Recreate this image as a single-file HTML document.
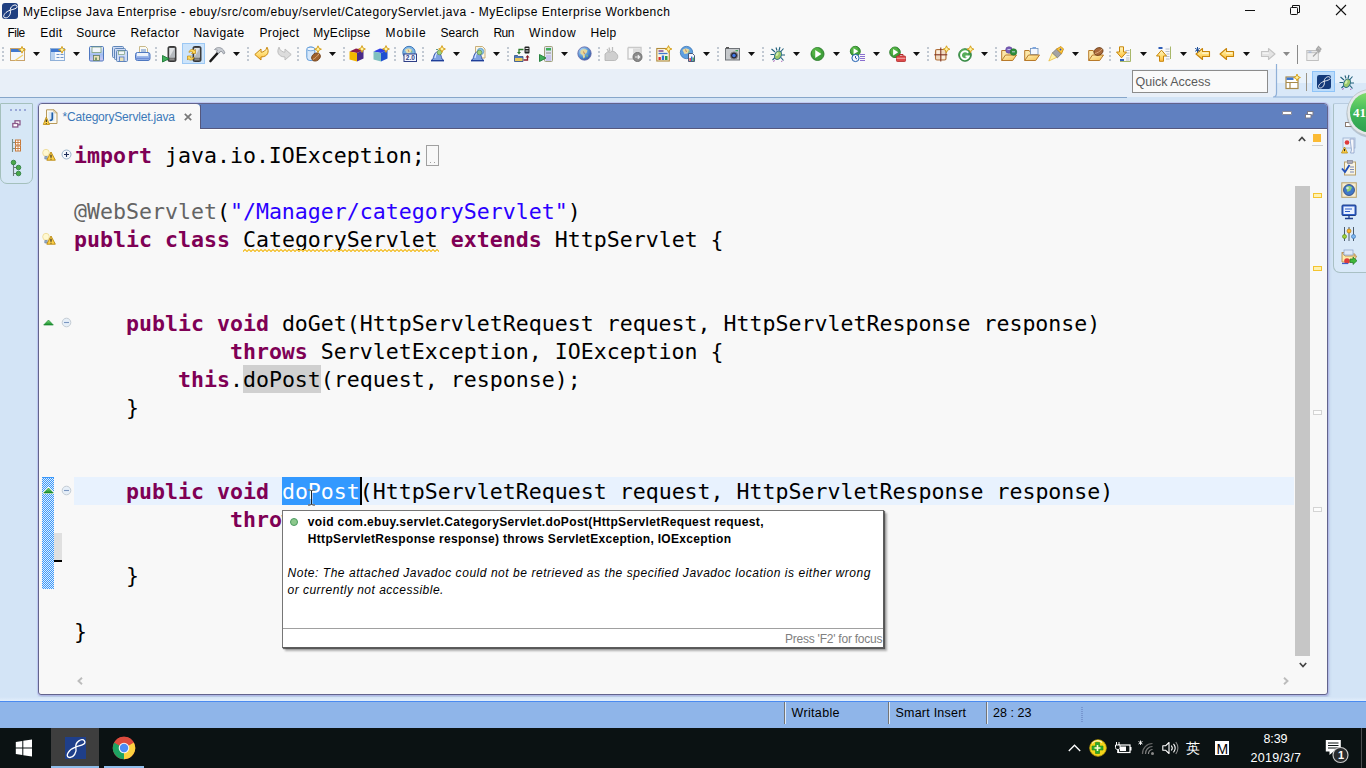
<!DOCTYPE html>
<html lang="en"><head><meta charset="utf-8"><title>MyEclipse Java Enterprise - CategoryServlet.java</title>
<style>
*{box-sizing:border-box}
html,body{margin:0;padding:0}
body{width:1366px;height:768px;overflow:hidden;position:relative;background:#d3e4f6;font-family:'Liberation Sans',sans-serif;font-size:12px;color:#000}
.a{position:absolute}
.t{position:absolute;white-space:pre;line-height:16px;height:16px}
svg{position:absolute;overflow:visible}
.code{position:absolute;left:74px;white-space:pre;font-family:'DejaVu Sans Mono','Liberation Mono',monospace;font-size:21.593px;line-height:28px;height:28px;color:#000}
.k{color:#7f0055;font-weight:bold}
.s{color:#2a00ff}
.an{color:#646464}
.sel{color:#fff}

</style></head><body>
<div class="a" style="left:0;top:0;width:1366px;height:43px;background:#f9f9f9"></div><div class="a" style="left:0;top:43px;width:1366px;height:26px;background:#f9f9f9"></div><div class="a" style="left:0;top:69px;width:1366px;height:28px;background:#e8eff8"></div><div class="a" style="left:0;top:97px;width:1127px;height:1px;background:#86a6ca"></div><div class="a" style="left:0;top:98px;width:1366px;height:602px;background:#d3e4f6"></div><span class="t" style="left:23px;top:3.5px;font-size:12px;letter-spacing:0.506px;">MyEclipse Java Enterprise - ebuy/src/com/ebuy/servlet/CategoryServlet.java - MyEclipse Enterprise Workbench</span><span class="t" style="left:7.5px;top:24.5px;font-size:12px;letter-spacing:-0.515px;">File</span><span class="t" style="left:40.3px;top:24.5px;font-size:12px;letter-spacing:0.338px;">Edit</span><span class="t" style="left:76.3px;top:24.5px;font-size:12px;letter-spacing:0.274px;">Source</span><span class="t" style="left:130.4px;top:24.5px;font-size:12px;letter-spacing:0.492px;">Refactor</span><span class="t" style="left:193.4px;top:24.5px;font-size:12px;letter-spacing:0.504px;">Navigate</span><span class="t" style="left:259.5px;top:24.5px;font-size:12px;letter-spacing:0.357px;">Project</span><span class="t" style="left:313.3px;top:24.5px;font-size:12px;letter-spacing:0.289px;">MyEclipse</span><span class="t" style="left:385.5px;top:24.5px;font-size:12px;letter-spacing:0.988px;">Mobile</span><span class="t" style="left:440.5px;top:24.5px;font-size:12px;letter-spacing:0.034px;">Search</span><span class="t" style="left:493.4px;top:24.5px;font-size:12px;letter-spacing:-0.458px;">Run</span><span class="t" style="left:529px;top:24.5px;font-size:12px;letter-spacing:0.783px;">Window</span><span class="t" style="left:590.4px;top:24.5px;font-size:12px;letter-spacing:0.371px;">Help</span><svg width="0" height="0" style="left:0;top:0"><defs><linearGradient id="yg" x1="0" y1="0" x2="0" y2="1"><stop offset="0" stop-color="#fff6c8"/><stop offset=".5" stop-color="#ffe07a"/><stop offset="1" stop-color="#ffb83a"/></linearGradient><linearGradient id="fg" x1="0" y1="0" x2="1" y2="1"><stop offset="0" stop-color="#fff0b8"/><stop offset="1" stop-color="#f4c050"/></linearGradient></defs></svg><div class="a" style="left:2px;top:47px;width:2px;height:2px;background:#c2c9d2"></div><div class="a" style="left:2px;top:51px;width:2px;height:2px;background:#c2c9d2"></div><div class="a" style="left:2px;top:55px;width:2px;height:2px;background:#c2c9d2"></div><div class="a" style="left:2px;top:59px;width:2px;height:2px;background:#c2c9d2"></div><svg style="left:10px;top:46px" width="16" height="16" viewBox="0 0 16 16"><rect x=".5" y="2.5" width="14" height="12" fill="#f4f7fb" stroke="#c9a36a"/><rect x="1" y="3" width="10" height="3" fill="#3f78d0"/><path d="M5 14.5L13 9" stroke="#f1cf6a" stroke-width="1.2" fill="none"/><path d="M12 0.3999999999999999L13.0 2.8L15.4 3.8L13.0 4.8L12 7.199999999999999L11.0 4.8L8.6 3.8L11.0 2.8Z" fill="#fff3a0" stroke="#d39a12" stroke-width=".9"/></svg><svg style="left:33px;top:52px" width="7" height="4" viewBox="0 0 7 4"><path d="M0 0h7L3.5 4z" fill="#111"/></svg><svg style="left:50px;top:46px" width="16" height="16" viewBox="0 0 16 16"><rect x=".5" y="2.5" width="14" height="12" fill="#f4f7fb" stroke="#8fb0d8"/><rect x="1" y="3" width="10" height="3" fill="#3f78d0"/><rect x="1" y="6" width="4" height="8" fill="#b9d2f0"/><path d="M6.5 8.5h7M6.5 11.5h7" stroke="#6f95c8" stroke-width="1.2" stroke-dasharray="3 1"/><path d="M12 0.3999999999999999L13.0 2.8L15.4 3.8L13.0 4.8L12 7.199999999999999L11.0 4.8L8.6 3.8L11.0 2.8Z" fill="#fff3a0" stroke="#d39a12" stroke-width=".9"/></svg><svg style="left:73px;top:52px" width="7" height="4" viewBox="0 0 7 4"><path d="M0 0h7L3.5 4z" fill="#111"/></svg><svg style="left:89px;top:46px" width="16" height="16" viewBox="0 0 16 16"><defs><linearGradient id="sv" x1="0" y1="0" x2="0" y2="1"><stop offset="0" stop-color="#f2f6fd"/><stop offset=".55" stop-color="#a4bef0"/><stop offset="1" stop-color="#d0c8f4"/></linearGradient></defs><rect x=".5" y=".5" width="14" height="14.5" rx="1.2" fill="url(#sv)" stroke="#4f78c0"/><rect x="3" y="1" width="9" height="5.5" fill="#f4f6fb" stroke="#7aa07a" stroke-width=".8"/><rect x="4.5" y="9.5" width="6" height="5" fill="#e9e0b8" stroke="#5f7a5f" stroke-width=".8"/><rect x="6" y="11.5" width="2" height="3" fill="#7a9a6a"/></svg><svg style="left:111.5px;top:46px" width="16" height="16" viewBox="0 0 16 16"><rect x="0.5" y="0.5" width="11" height="11" rx="1" fill="#cfdcf6" stroke="#5f86b8"/><rect x="2.5" y="2.5" width="11" height="11" rx="1" fill="#cfdcf6" stroke="#5f86b8"/><rect x="4.5" y="4.5" width="11" height="11" rx="1" fill="#cfdcf6" stroke="#5f86b8"/><rect x="6.5" y="5" width="6" height="3.5" fill="#f4f6fb" stroke="#7aa07a" stroke-width=".7"/><rect x="7.5" y="11" width="4.5" height="4.5" fill="#e9e0b8" stroke="#4f78c0" stroke-width=".8"/></svg><svg style="left:135px;top:46px" width="16" height="16" viewBox="0 0 16 16"><path d="M4.5 .5h6l2 2v7h-8z" fill="#fbfbf4" stroke="#c9b98a"/><path d="M6 4h5M6 6h5" stroke="#5f86c8"/><rect x=".5" y="6.5" width="14.5" height="8" rx="2" fill="#9db8ea" stroke="#4f78c0"/><rect x="2" y="7" width="11" height="3" fill="#eef3fb"/><path d="M1 12.5h14" stroke="#6f8fd8" stroke-width="1.5"/></svg><div class="a" style="left:155px;top:47px;width:2px;height:2px;background:#c2c9d2"></div><div class="a" style="left:155px;top:51px;width:2px;height:2px;background:#c2c9d2"></div><div class="a" style="left:155px;top:55px;width:2px;height:2px;background:#c2c9d2"></div><div class="a" style="left:155px;top:59px;width:2px;height:2px;background:#c2c9d2"></div><svg style="left:162px;top:46px" width="16" height="16" viewBox="0 0 16 16"><rect x="6" y=".5" width="8" height="15" rx="1.500" fill="#4a4a4a" stroke="#2a2a2a" stroke-width=".9"/><rect x="7.2" y="2" width="5.600" height="9.500" fill="#dfe2e4"/><path d="M7.2 11.500L12.8 2v9.500z" fill="#b4b9bd"/><rect x="7.5" y="12.300" width="5" height="2" fill="#8a8a8a"/><path d="M.5 9.5v6.5l6.5-3.2z" fill="#3fae5a" stroke="#1d7a35" stroke-width=".9"/></svg><div class="a" style="left:182px;top:43px;width:23px;height:21px;background:#cce4fb;border:1px solid #9cc8f4"></div><svg style="left:186px;top:46px" width="16" height="16" viewBox="0 0 16 16"><rect x="7" y=".5" width="8" height="15" rx="1.500" fill="#4a4a4a" stroke="#2a2a2a" stroke-width=".9"/><rect x="8.2" y="2" width="5.600" height="9.500" fill="#dfe2e4"/><path d="M8.2 11.500L13.8 2v9.500z" fill="#b4b9bd"/><rect x="8.5" y="12.300" width="5" height="2" fill="#8a8a8a"/><path d="M3 6.5c0-3 4-4 5.5-2l1-1v4h-4l1.3-1.3c-1-1-3-.6-3.800 .3z" fill="#ffd95a" stroke="#c08a10" stroke-width=".7"/><path d="M8 11c0 3-4 4-5.500 2l-1 1v-4h4l-1.300 1.300c1 1 3 .6 3.800-.3z" fill="#ffd95a" stroke="#c08a10" stroke-width=".7"/></svg><svg style="left:209px;top:46px" width="16" height="16" viewBox="0 0 16 16"><path d="M1.500 15L10 5.500" stroke="#1a1a1a" stroke-width="2.600" stroke-linecap="round"/><path d="M5.500 3.500c2-2.500 6-3 9 .5l1.500 3-1.500 1-1.500-2.500-2 .2-1.500 1.800-2-1.800 1-1.500z" fill="#c8ccd2" stroke="#8a8f98" stroke-width=".8"/></svg><svg style="left:233px;top:52px" width="7" height="4" viewBox="0 0 7 4"><path d="M0 0h7L3.5 4z" fill="#111"/></svg><div class="a" style="left:247px;top:47px;width:2px;height:2px;background:#c2c9d2"></div><div class="a" style="left:247px;top:51px;width:2px;height:2px;background:#c2c9d2"></div><div class="a" style="left:247px;top:55px;width:2px;height:2px;background:#c2c9d2"></div><div class="a" style="left:247px;top:59px;width:2px;height:2px;background:#c2c9d2"></div><svg style="left:254px;top:46px" width="16" height="16" viewBox="0 0 16 16"><g><path d="M.8 8.500L7 3v3.200c2.500 0 5-1.500 6-5 2.500 4.500 1 9.500-6 9.800V14z" fill="url(#yg)" stroke="#c8860a" stroke-width="1" stroke-linejoin="round"/></g></svg><svg style="left:276px;top:46px" width="16" height="16" viewBox="0 0 16 16"><g transform="translate(16,0) scale(-1,1)"><path d="M.8 8.500L7 3v3.200c2.500 0 5-1.500 6-5 2.500 4.500 1 9.500-6 9.800V14z" fill="#dcdcdc" stroke="#bdbdbd" stroke-width="1" stroke-linejoin="round"/></g></svg><div class="a" style="left:297px;top:47px;width:2px;height:2px;background:#c2c9d2"></div><div class="a" style="left:297px;top:51px;width:2px;height:2px;background:#c2c9d2"></div><div class="a" style="left:297px;top:55px;width:2px;height:2px;background:#c2c9d2"></div><div class="a" style="left:297px;top:59px;width:2px;height:2px;background:#c2c9d2"></div><svg style="left:306px;top:46px" width="16" height="16" viewBox="0 0 16 16"><rect x=".8" y="1" width="8" height="13.500" rx="3" fill="#d6e8fb" stroke="#5f9ad8"/><ellipse cx="4.800" cy="3" rx="4" ry="1.800" fill="#eef6ff" stroke="#5f9ad8" stroke-width=".8"/><ellipse cx="10" cy="11" rx="4.700" ry="3.700" transform="rotate(-35 10 11)" fill="#a0622d" stroke="#6a3a12" stroke-width=".8"/><path d="M6.800 13.500c2-1 4.500-3 6-5.500" stroke="#e0b080" stroke-width=".9" fill="none"/><path d="M12 -0.19999999999999973L13.0 2.2L15.4 3.2L13.0 4.2L12 6.6L11.0 4.2L8.6 3.2L11.0 2.2Z" fill="#fff3a0" stroke="#d39a12" stroke-width=".9"/></svg><svg style="left:329px;top:52px" width="7" height="4" viewBox="0 0 7 4"><path d="M0 0h7L3.5 4z" fill="#111"/></svg><div class="a" style="left:343px;top:47px;width:2px;height:2px;background:#c2c9d2"></div><div class="a" style="left:343px;top:51px;width:2px;height:2px;background:#c2c9d2"></div><div class="a" style="left:343px;top:55px;width:2px;height:2px;background:#c2c9d2"></div><div class="a" style="left:343px;top:59px;width:2px;height:2px;background:#c2c9d2"></div><svg style="left:349px;top:46px" width="16" height="16" viewBox="0 0 16 16"><path d="M.5 5.500L7 2.500l7.500 1.500L8 7z" fill="#8a1a4a"/><path d="M.5 5.500L8 7v8.500L.5 13.500z" fill="#f4b800"/><path d="M8 7l6.500-3v8.500L8 15.500z" fill="#4a2a8a"/><path d="M13 -0.3999999999999999L14.0 2.0L16.4 3L14.0 4.0L13 6.4L12.0 4.0L9.6 3L12.0 2.0Z" fill="#fff3a0" stroke="#d39a12" stroke-width=".9"/></svg><svg style="left:373px;top:46px" width="16" height="16" viewBox="0 0 16 16"><path d="M.5 5.500L7 2.500l7.500 1.500L8 7z" fill="#2f3fe8"/><path d="M.5 5.500L8 7v8.500L.5 13.500z" fill="#7fc0c0"/><path d="M8 7l6.500-3v8.500L8 15.500z" fill="#1f4fd0"/><path d="M13 -0.3999999999999999L14.0 2.0L16.4 3L14.0 4.0L13 6.4L12.0 4.0L9.6 3L12.0 2.0Z" fill="#fff3a0" stroke="#d39a12" stroke-width=".9"/></svg><div class="a" style="left:394px;top:47px;width:2px;height:2px;background:#c2c9d2"></div><div class="a" style="left:394px;top:51px;width:2px;height:2px;background:#c2c9d2"></div><div class="a" style="left:394px;top:55px;width:2px;height:2px;background:#c2c9d2"></div><div class="a" style="left:394px;top:59px;width:2px;height:2px;background:#c2c9d2"></div><svg style="left:401px;top:46px" width="16" height="16" viewBox="0 0 16 16"><circle cx="8" cy="6.500" r="6.200" fill="#7fb6e6" stroke="#3f78b8"/><path d="M4 4c2-2 5-2 7 0l-2 3-3 .5z" fill="#e9e2b0"/><path d="M7 3.500l1 2.500" stroke="#c0704a" stroke-width=".7"/><path d="M10 4l1.500 2-1 1z" fill="#8fc06a"/><rect x="3" y="8" width="12.500" height="7.500" fill="#f4f6ff" stroke="#2f3f86" stroke-width="1"/><text x="9.300" y="14.300" font-size="6.500" font-weight="bold" font-family="Liberation Sans,sans-serif" text-anchor="middle" fill="#2f3f86">2.0</text></svg><div class="a" style="left:422px;top:47px;width:2px;height:2px;background:#c2c9d2"></div><div class="a" style="left:422px;top:51px;width:2px;height:2px;background:#c2c9d2"></div><div class="a" style="left:422px;top:55px;width:2px;height:2px;background:#c2c9d2"></div><div class="a" style="left:422px;top:59px;width:2px;height:2px;background:#c2c9d2"></div><svg style="left:430px;top:46px" width="16" height="16" viewBox="0 0 16 16"><path d="M1 14.500h13l-2-1.500c-1-4-2-7-4.500-7S4 9 3 13z" fill="#7fa2e2" stroke="#2f4fa8" stroke-width=".9"/><path d="M5 12c.5-3 1.500-5 2.500-5" stroke="#dbe8ff" stroke-width="1.200" fill="none"/><path d="M1 14.700h13" stroke="#1f3f9a" stroke-width="1.400"/><circle cx="9.500" cy="6.500" r="2.300" fill="#9fd07a" stroke="#5f8f4a" stroke-width=".7"/><path d="M12 -0.3999999999999999L13.0 2.0L15.4 3L13.0 4.0L12 6.4L11.0 4.0L8.6 3L11.0 2.0Z" fill="#fff3a0" stroke="#d39a12" stroke-width=".9"/><path d="M8 3.500h-2" stroke="#5f9a8a"/></svg><svg style="left:453px;top:52px" width="7" height="4" viewBox="0 0 7 4"><path d="M0 0h7L3.5 4z" fill="#111"/></svg><svg style="left:470px;top:46px" width="16" height="16" viewBox="0 0 16 16"><path d="M5.500 .5h7l2.500 2.500v9h-9.500z" fill="#fbf6e6" stroke="#c9b07a"/><circle cx="10.500" cy="5.500" r="3.200" fill="#8fc6e8" stroke="#4f8fc0" stroke-width=".7"/><path d="M1 14.500h13l-2-1.500c-1-4-2-7-4.500-7S4 9 3 13z" fill="#7fa2e2" stroke="#2f4fa8" stroke-width=".9"/><path d="M5 12c.5-3 1.500-5 2.500-5" stroke="#dbe8ff" stroke-width="1.200" fill="none"/><path d="M1 14.700h13" stroke="#1f3f9a" stroke-width="1.400"/><circle cx="9.500" cy="6.500" r="2.300" fill="#9fd07a" stroke="#5f8f4a" stroke-width=".7"/></svg><svg style="left:493px;top:52px" width="7" height="4" viewBox="0 0 7 4"><path d="M0 0h7L3.5 4z" fill="#111"/></svg><div class="a" style="left:507px;top:47px;width:2px;height:2px;background:#c2c9d2"></div><div class="a" style="left:507px;top:51px;width:2px;height:2px;background:#c2c9d2"></div><div class="a" style="left:507px;top:55px;width:2px;height:2px;background:#c2c9d2"></div><div class="a" style="left:507px;top:59px;width:2px;height:2px;background:#c2c9d2"></div><svg style="left:513.5px;top:46px" width="16" height="16" viewBox="0 0 16 16"><rect x="10.500" y=".5" width="5" height="7" rx="1" fill="#222"/><path d="M11.500 2.500h3M11.500 5h3" stroke="#e8e8e8" stroke-width="1.100"/><path d="M9.500 3.500H5v3" stroke="#2f7a2f" stroke-width="1.300" fill="none"/><path d="M3 6l2 2.500L7 6z" fill="#2f7a2f"/><path d="M.5 9.500h3l1 1h4.500v5H.5z" fill="#4f78b8" stroke="#2f4f86" stroke-width=".8"/><path d="M1 12h7.500v3H1z" fill="#e9c95a"/><path d="M9.500 14h4v-3" stroke="#8a1a2a" stroke-width="1.300" fill="none"/><path d="M11.500 11.500l2-2.500 2 2.500z" fill="#8a1a2a"/></svg><svg style="left:538.5px;top:46px" width="16" height="16" viewBox="0 0 16 16"><rect x="5.500" y=".5" width="8" height="15" rx="1" fill="#dfe3ee" stroke="#a0a07a"/><rect x="7" y="2" width="5" height="2.500" fill="#3fae5a"/><path d="M7 7h5" stroke="#888"/><rect x="7" y="9" width="5" height="6" fill="#c9c6ee"/><path d="M.5 8.500V15.500l6.500-3.500z" fill="#3fae5a" stroke="#1d7a35" stroke-width=".9"/></svg><svg style="left:561px;top:52px" width="7" height="4" viewBox="0 0 7 4"><path d="M0 0h7L3.5 4z" fill="#111"/></svg><svg style="left:577px;top:46px" width="16" height="16" viewBox="0 0 16 16"><defs><radialGradient id="gl" cx=".35" cy=".3" r=".8"><stop offset="0" stop-color="#bfe0fb"/><stop offset=".6" stop-color="#4f8fd0"/><stop offset="1" stop-color="#2a4f9a"/></radialGradient></defs><circle cx="7.500" cy="7.500" r="6.700" fill="url(#gl)" stroke="#6a6aa8" stroke-width=".8"/><path d="M3.500 5c1.500-2 5-2.500 7-.5l-1 2.500-2 1 .5 3-1.500 1.500-1-3.500-2-1.500z" fill="#e4d89a"/><path d="M6.500 5.500l1 2.500" stroke="#b85a3a" stroke-width=".7"/><path d="M9 8.500l2 1-1 2z" fill="#8fc06a"/></svg><div class="a" style="left:598px;top:47px;width:2px;height:2px;background:#c2c9d2"></div><div class="a" style="left:598px;top:51px;width:2px;height:2px;background:#c2c9d2"></div><div class="a" style="left:598px;top:55px;width:2px;height:2px;background:#c2c9d2"></div><div class="a" style="left:598px;top:59px;width:2px;height:2px;background:#c2c9d2"></div><svg style="left:604px;top:46px" width="16" height="16" viewBox="0 0 16 16"><path d="M1 14.500V8l3-2.500 2 1 2-1.500 3 1 2.500 3c1 3-1 5.500-3 5.500z" fill="#cfcfcf" stroke="#b0b0b0" stroke-width=".8"/><path d="M5 1.500l1 4M8.500 1v4.500M3 3l2 3" stroke="#bdbdbd" stroke-width="1.300"/></svg><svg style="left:627px;top:46px" width="16" height="16" viewBox="0 0 16 16"><path d="M1 1.500h13V9M1 1.500V13h5" fill="none" stroke="#c9c9c9" stroke-width="1.400"/><rect x="6" y="2.500" width="7" height="6" fill="#dcdcdc"/><circle cx="10.500" cy="11" r="4.500" fill="#8c8c8c" stroke="#6f6f6f"/><path d="M8 11h4.500M10.800 9.300l1.800 1.700-1.800 1.700" stroke="#f0f0f0" stroke-width="1.200" fill="none"/></svg><div class="a" style="left:649px;top:47px;width:2px;height:2px;background:#c2c9d2"></div><div class="a" style="left:649px;top:51px;width:2px;height:2px;background:#c2c9d2"></div><div class="a" style="left:649px;top:55px;width:2px;height:2px;background:#c2c9d2"></div><div class="a" style="left:649px;top:59px;width:2px;height:2px;background:#c2c9d2"></div><svg style="left:655.5px;top:46px" width="16" height="16" viewBox="0 0 16 16"><rect x=".8" y="2.500" width="12.500" height="12.500" fill="#fbf6e4" stroke="#b08a3a" stroke-width="1.100"/><path d="M2.500 5h5" stroke="#6a2a8a" stroke-width="1.300"/><path d="M2.500 7.500h9" stroke="#3f78d0" stroke-width="1.300"/><rect x="2.500" y="11" width="2.300" height="3" fill="#e02a2a"/><rect x="5.800" y="9.500" width="2.300" height="4.500" fill="#2f6fd8"/><rect x="9" y="10" width="2.500" height="4" fill="#2f9a4a"/><path d="M12.5 -0.3999999999999999L13.5 2.0L15.9 3L13.5 4.0L12.5 6.4L11.5 4.0L9.1 3L11.5 2.0Z" fill="#fff3a0" stroke="#d39a12" stroke-width=".9"/></svg><svg style="left:680px;top:46px" width="16" height="16" viewBox="0 0 16 16"><circle cx="6.500" cy="6.500" r="6.200" fill="#5f9fe0" stroke="#3f78b8" stroke-width=".8"/><path d="M2.500 4c2-2 5-2 7 0l-2 3.500-3 .5z" fill="#e8d9a0"/><path d="M5.500 3.500l1 2.500" stroke="#b85a3a" stroke-width=".7"/><path d="M8.500 4l1.500 2-1.500 1z" fill="#8fc06a"/><path d="M8.500 7.500h4l2 2v6h-6z" fill="#f4f6ff" stroke="#3a4a6a" stroke-width=".9"/><rect x="9.500" y="12" width="1.300" height="3" fill="#e02a2a"/><rect x="11" y="10.500" width="1.300" height="4.500" fill="#2f6fd8"/><rect x="12.500" y="11.500" width="1.300" height="3.500" fill="#2f9a4a"/></svg><svg style="left:703px;top:52px" width="7" height="4" viewBox="0 0 7 4"><path d="M0 0h7L3.5 4z" fill="#111"/></svg><div class="a" style="left:717px;top:47px;width:2px;height:2px;background:#c2c9d2"></div><div class="a" style="left:717px;top:51px;width:2px;height:2px;background:#c2c9d2"></div><div class="a" style="left:717px;top:55px;width:2px;height:2px;background:#c2c9d2"></div><div class="a" style="left:717px;top:59px;width:2px;height:2px;background:#c2c9d2"></div><svg style="left:724.5px;top:46px" width="16" height="16" viewBox="0 0 16 16"><rect x=".5" y="2.500" width="14" height="11.500" fill="#c6c9cc" stroke="#6f7378"/><rect x="1" y="1" width="3" height="1.500" fill="#555"/><rect x="10.500" y="4" width="2.500" height="1.300" fill="#3fae5a"/><circle cx="9" cy="9.500" r="3.600" fill="#2a2a3a" stroke="#888"/><circle cx="9" cy="9.500" r="1.700" fill="#3f78e8"/></svg><svg style="left:748px;top:52px" width="7" height="4" viewBox="0 0 7 4"><path d="M0 0h7L3.5 4z" fill="#111"/></svg><div class="a" style="left:762px;top:47px;width:2px;height:2px;background:#c2c9d2"></div><div class="a" style="left:762px;top:51px;width:2px;height:2px;background:#c2c9d2"></div><div class="a" style="left:762px;top:55px;width:2px;height:2px;background:#c2c9d2"></div><div class="a" style="left:762px;top:59px;width:2px;height:2px;background:#c2c9d2"></div><svg style="left:770px;top:46px" width="16" height="16" viewBox="0 0 16 16"><path d="M1.500 3l3.500 3M13.500 2.500l-3 3.500M.5 8.500h3.500M15 9h-3.500M2.500 14l2.500-2.500M13.500 14.500l-2.500-3M6 1.500l1 3M10 1l-1 3.500" stroke="#1f5f7a" stroke-width="1.100" fill="none"/><ellipse cx="8" cy="9.200" rx="3.200" ry="4.500" transform="rotate(28 8 9.200)" fill="#9cc86a" stroke="#2a6a84" stroke-width="1"/><ellipse cx="7.200" cy="8.200" rx="1.200" ry="2" transform="rotate(28 7.200 8.200)" fill="#d2ecaa"/><path d="M3 15.500l2-1M11 15.500l1.500-.5" stroke="#a04fb0" stroke-width=".8"/></svg><svg style="left:793px;top:52px" width="7" height="4" viewBox="0 0 7 4"><path d="M0 0h7L3.5 4z" fill="#111"/></svg><svg style="left:809.5px;top:46px" width="16" height="16" viewBox="0 0 16 16"><circle cx="7.5" cy="8" r="6.5" fill="#3f9f3a" stroke="#2a7a2a" stroke-width=".9"/><circle cx="6.525" cy="6.375" r="4.55" fill="#5fbf4a" opacity=".6"/><path d="M5.225 4.1L11.4 8L5.225 11.9z" fill="#fff"/></svg><svg style="left:833px;top:52px" width="7" height="4" viewBox="0 0 7 4"><path d="M0 0h7L3.5 4z" fill="#111"/></svg><svg style="left:848.5px;top:46px" width="16" height="16" viewBox="0 0 16 16"><circle cx="6.3" cy="5.3" r="5" fill="#3f9f3a" stroke="#2a7a2a" stroke-width=".9"/><circle cx="5.55" cy="4.05" r="3.5" fill="#5fbf4a" opacity=".6"/><path d="M4.55 2.3L9.3 5.3L4.55 8.3z" fill="#fff"/><circle cx="6.500" cy="12" r="3.600" fill="#f4f8ff" stroke="#1f5fb0" stroke-width="1"/><path d="M6.500 10v2l1.500 1" stroke="#1f3f8a" stroke-width=".9" fill="none"/><path d="M11 8.500h5M11 10.500h5M11 12.500h5M11 14.500h5" stroke="#8a6fd0" stroke-width="1"/></svg><svg style="left:873px;top:52px" width="7" height="4" viewBox="0 0 7 4"><path d="M0 0h7L3.5 4z" fill="#111"/></svg><svg style="left:888.5px;top:46px" width="16" height="16" viewBox="0 0 16 16"><circle cx="6" cy="6.3" r="5.3" fill="#3f9f3a" stroke="#2a7a2a" stroke-width=".9"/><circle cx="5.205" cy="4.975" r="3.7099999999999995" fill="#5fbf4a" opacity=".6"/><path d="M4.1450000000000005 3.12L9.18 6.3L4.1450000000000005 9.48z" fill="#fff"/><rect x="7.500" y="10" width="9" height="5.500" rx=".8" fill="#e04a4a" stroke="#b02a2a" stroke-width=".8"/><path d="M10 10V8.500h4V10" stroke="#b02a2a" fill="none"/><path d="M7.500 12.300h9" stroke="#f4c0c0" stroke-width=".8"/></svg><svg style="left:913px;top:52px" width="7" height="4" viewBox="0 0 7 4"><path d="M0 0h7L3.5 4z" fill="#111"/></svg><div class="a" style="left:927px;top:47px;width:2px;height:2px;background:#c2c9d2"></div><div class="a" style="left:927px;top:51px;width:2px;height:2px;background:#c2c9d2"></div><div class="a" style="left:927px;top:55px;width:2px;height:2px;background:#c2c9d2"></div><div class="a" style="left:927px;top:59px;width:2px;height:2px;background:#c2c9d2"></div><svg style="left:934px;top:46px" width="16" height="16" viewBox="0 0 16 16"><rect x="1.500" y="3.500" width="10.500" height="10.500" rx="1.500" fill="#f0d9c0" stroke="#b0703a" stroke-width="1.100"/><path d="M6.800 1.500v14M.3 8.800h13" stroke="#7a2a1a" stroke-width="1"/><rect x="3" y="5" width="2.800" height="2.800" fill="#fbeedd"/><rect x="8" y="10" width="2.800" height="2.800" fill="#fbeedd"/><path d="M12.5 -0.19999999999999973L13.5 2.2L15.9 3.2L13.5 4.2L12.5 6.6L11.5 4.2L9.1 3.2L11.5 2.2Z" fill="#fff3a0" stroke="#d39a12" stroke-width=".9"/></svg><svg style="left:958px;top:46px" width="16" height="16" viewBox="0 0 16 16"><circle cx="7" cy="9" r="6.300" fill="#3f9a4a" stroke="#2a7a3a" stroke-width=".9"/><circle cx="6" cy="7.500" r="4.500" fill="#6fc06a" opacity=".5"/><path d="M10.200 6.800A4 4 0 1 0 10.800 10.500H7.500" stroke="#fff" stroke-width="1.900" fill="none"/><path d="M12.5 -0.19999999999999973L13.5 2.2L15.9 3.2L13.5 4.2L12.5 6.6L11.5 4.2L9.1 3.2L11.5 2.2Z" fill="#fff3a0" stroke="#d39a12" stroke-width=".9"/></svg><svg style="left:981px;top:52px" width="7" height="4" viewBox="0 0 7 4"><path d="M0 0h7L3.5 4z" fill="#111"/></svg><div class="a" style="left:995px;top:47px;width:2px;height:2px;background:#c2c9d2"></div><div class="a" style="left:995px;top:51px;width:2px;height:2px;background:#c2c9d2"></div><div class="a" style="left:995px;top:55px;width:2px;height:2px;background:#c2c9d2"></div><div class="a" style="left:995px;top:59px;width:2px;height:2px;background:#c2c9d2"></div><svg style="left:1001px;top:46px" width="16" height="16" viewBox="0 0 16 16"><path d="M.7 14.500V4.500h4.500l1 1.500h6V9" fill="#fbe7a8" stroke="#b87a2a" stroke-width="1" stroke-linejoin="round"/><path d="M.7 14.500L4.500 9H15.500L11.700 14.500z" fill="url(#fg)" stroke="#b87a2a" stroke-width="1" stroke-linejoin="round"/><circle cx="8" cy="4" r="3.300" fill="#7a5fb8" stroke="#5a3f98" stroke-width=".6"/><circle cx="12.500" cy="6" r="3.300" fill="#2f8f3a" stroke="#1f6f2a" stroke-width=".6"/><path d="M6.500 3.500h3M11 5.800h3" stroke="#d0d0f0" stroke-width=".9"/></svg><svg style="left:1024px;top:46px" width="16" height="16" viewBox="0 0 16 16"><path d="M.7 14.500V4.500h4.500l1 1.500h6V9" fill="#fbe7a8" stroke="#b87a2a" stroke-width="1" stroke-linejoin="round"/><rect x="6.500" y="2.500" width="7.500" height="6" fill="#f4f8ff" stroke="#6f8fb8" stroke-width=".8"/><rect x="8.500" y="1" width="3.500" height="1.800" fill="#7fa8e0"/><path d="M.7 14.500L4.500 9H15.500L11.700 14.500z" fill="url(#fg)" stroke="#b87a2a" stroke-width="1" stroke-linejoin="round"/></svg><svg style="left:1048px;top:46px" width="16" height="16" viewBox="0 0 16 16"><path d="M.8 15L4.500 6.500l5 4.500z" fill="#fff2a8" stroke="#e8b830" stroke-width=".7"/><path d="M4.300 7l4.200-4 4.800 4.800-3.800 4z" fill="#a4a4a4" stroke="#707070" stroke-width=".7"/><path d="M8.500 3L13 .5l2.500 2.500-2 4.800z" fill="#ffc83a" stroke="#c8860a" stroke-width=".8"/><circle cx="12.500" cy="3.500" r=".9" fill="#2a4fc0"/></svg><svg style="left:1072px;top:52px" width="7" height="4" viewBox="0 0 7 4"><path d="M0 0h7L3.5 4z" fill="#111"/></svg><svg style="left:1088px;top:46px" width="16" height="16" viewBox="0 0 16 16"><path d="M.7 14.500V4.500h4.500l1 1.500h6V9" fill="#fbe7a8" stroke="#b87a2a" stroke-width="1" stroke-linejoin="round"/><path d="M.7 14.500L4.500 9H15.500L11.700 14.500z" fill="url(#fg)" stroke="#b87a2a" stroke-width="1" stroke-linejoin="round"/><ellipse cx="10.500" cy="5.500" rx="4.700" ry="3.700" transform="rotate(-25 10.500 5.500)" fill="#a8683a" stroke="#6a3a12" stroke-width=".8"/><path d="M7 7.500c2-.5 5-2 7-4.500" stroke="#e0b080" stroke-width=".9" fill="none"/></svg><div class="a" style="left:1109px;top:47px;width:2px;height:2px;background:#c2c9d2"></div><div class="a" style="left:1109px;top:51px;width:2px;height:2px;background:#c2c9d2"></div><div class="a" style="left:1109px;top:55px;width:2px;height:2px;background:#c2c9d2"></div><div class="a" style="left:1109px;top:59px;width:2px;height:2px;background:#c2c9d2"></div><svg style="left:1115.5px;top:46px" width="16" height="16" viewBox="0 0 16 16"><path d="M14.500 3v12.500H4" fill="none" stroke="#a8b86a" stroke-width="1"/><path d="M9.500 4.500h4M9.500 7h4M10.500 9.500h3M10 12h3.500M10 14h3.500" stroke="#b8c0cc" stroke-width="1"/><rect x="4" y="13" width="4" height="2" fill="#2f5fb8"/><path d="M3.500 .8h4V6h3L5.500 11.800.5 6h3z" fill="url(#yg)" stroke="#c8860a" stroke-width="1" stroke-linejoin="round"/></svg><svg style="left:1140px;top:52px" width="7" height="4" viewBox="0 0 7 4"><path d="M0 0h7L3.5 4z" fill="#111"/></svg><svg style="left:1155.5px;top:46px" width="16" height="16" viewBox="0 0 16 16"><path d="M14.500 .5V13" fill="none" stroke="#a8b86a" stroke-width="1"/><path d="M9.500 3h4M9.500 5.500h4M10.500 8h3M10 10.500h3.500M10 13h3.500" stroke="#b8c0cc" stroke-width="1"/><rect x="2.500" y="1" width="4" height="2" fill="#2f5fb8"/><path d="M3.500 15.300h4V10h3L5.500 4.200.5 10h3z" fill="url(#yg)" stroke="#c8860a" stroke-width="1" stroke-linejoin="round"/></svg><svg style="left:1180px;top:52px" width="7" height="4" viewBox="0 0 7 4"><path d="M0 0h7L3.5 4z" fill="#111"/></svg><svg style="left:1195px;top:46px" width="16" height="16" viewBox="0 0 16 16"><g><defs></defs><path d="M1 8L7.500 2.500v3H14.500v5H7.500v3z" fill="url(#yg)" stroke="#c8860a" stroke-width="1.100" stroke-linejoin="round"/><path d="M7.500 6.500h6v1.500h-6.500z" fill="#fff" opacity=".55"/></g><path d="M2.500 1v5.500M.2 2.300l4.600 3M4.800 2.300L.2 5.300" stroke="#1f4f9a" stroke-width="1"/></svg><svg style="left:1219px;top:46px" width="16" height="16" viewBox="0 0 16 16"><g><defs></defs><path d="M1 8L7.500 2.500v3H14.500v5H7.500v3z" fill="url(#yg)" stroke="#c8860a" stroke-width="1.100" stroke-linejoin="round"/><path d="M7.500 6.500h6v1.500h-6.500z" fill="#fff" opacity=".55"/></g></svg><svg style="left:1243px;top:52px" width="7" height="4" viewBox="0 0 7 4"><path d="M0 0h7L3.5 4z" fill="#111"/></svg><svg style="left:1259.5px;top:46px" width="16" height="16" viewBox="0 0 16 16"><g transform="translate(16,0) scale(-1,1)"><defs></defs><path d="M1 8L7.500 2.500v3H14.500v5H7.500v3z" fill="#e4e4e4" stroke="#c4c4c4" stroke-width="1.100" stroke-linejoin="round"/><path d="M7.500 6.500h6v1.500h-6.500z" fill="#fff" opacity=".55"/></g></svg><svg style="left:1283px;top:52px" width="7" height="4" viewBox="0 0 7 4"><path d="M0 0h7L3.5 4z" fill="#8a8a8a"/></svg><svg style="left:1306px;top:46px" width="16" height="16" viewBox="0 0 16 16"><rect x=".8" y="4.500" width="11.500" height="10" fill="#f0f0f0" stroke="#c0c0c0"/><path d="M1 6.500h11" stroke="#c8c8c8" stroke-width="1.500"/><path d="M2.500 6h3" stroke="#9ab0d8" stroke-width="1"/><path d="M7 10.500l4-4M10 3.500l3.500 3.500M11 2l3.500 3.500M10.500 3l2-2.500 2.500 2.500-2 2.500z" stroke="#a8a8a8" stroke-width="1.200" fill="#c8c8c8"/></svg><div class="a" style="left:1297px;top:45px;width:1px;height:19px;background:#8a8a8a"></div><div class="a" style="left:38px;top:103px;width:1290px;height:592px;background:#f8f8f8;border:1px solid #62648c;border-radius:4px 4px 3px 3px;box-shadow:0 0 0 1px rgba(176,176,240,.5),1px 2px 3px rgba(80,90,160,.3)"></div><div class="a" style="left:39px;top:104px;width:1288px;height:24px;background:#6080c0;border-radius:3px 3px 0 0"></div><div class="a" style="left:200px;top:128px;width:1127px;height:1px;background:#55587e"></div><div class="a" style="left:200px;top:129px;width:1127px;height:1px;background:#fff"></div><div class="a" style="left:39px;top:104px;width:161px;height:26px;background:#f8f8f8;border-radius:3px 4px 0 0"></div><div class="a" style="left:200px;top:105px;width:1px;height:24px;background:#55587e"></div><span class="t" style="left:62.5px;top:109.0px;font-size:12px;letter-spacing:-0.178px;color:#3b78b8">*CategoryServlet.java</span><div class="a" style="left:243px;top:365px;width:78px;height:28px;background:#d0d0d0"></div><div class="a" style="left:74px;top:477px;width:1220px;height:28px;background:#e8f2fe"></div><div class="a" style="left:282px;top:477px;width:78px;height:28px;background:#3399ff"></div><div class="code" style="top:142px"><span class="k">import</span> java.io.IOException;</div><div class="code" style="top:198px"><span class="an">@WebServlet</span>(<span class="s">"/Manager/categoryServlet"</span>)</div><div class="code" style="top:226px"><span class="k">public</span> <span class="k">class</span> CategoryServlet <span class="k">extends</span> HttpServlet {</div><div class="code" style="top:310px">    <span class="k">public</span> <span class="k">void</span> doGet(HttpServletRequest request, HttpServletResponse response)</div><div class="code" style="top:338px">            <span class="k">throws</span> ServletException, IOException {</div><div class="code" style="top:366px">        <span class="k">this</span>.<span class="occ">doPost</span>(request, response);</div><div class="code" style="top:394px">    }</div><div class="code" style="top:478px">    <span class="k">public</span> <span class="k">void</span> <span class="sel">doPost</span>(HttpServletRequest request, HttpServletResponse response)</div><div class="code" style="top:506px">            <span class="k">throws</span> ServletException, IOException {</div><div class="code" style="top:562px">    }</div><div class="code" style="top:618px">}</div><div class="a" style="left:282px;top:510px;width:602px;height:138px;background:#fff;border:1px solid #767676;border-right-color:#5c5c5c;border-bottom-color:#5c5c5c;box-shadow:1px 1px 1px rgba(50,50,50,.7),3px 3px 2px rgba(0,0,0,.3)"></div><div class="a" style="left:283px;top:628px;width:600px;height:1px;background:#a0a0a0"></div><div class="a" style="left:289.500px;top:518px;width:8px;height:8px;border-radius:50%;background:#8cc88c;border:1.500px solid #4a9a60"></div><span class="t" style="left:307.8px;top:514.0px;font-size:12px;letter-spacing:0.363px;font-weight:bold">void com.ebuy.servlet.CategoryServlet.doPost(HttpServletRequest request,</span><span class="t" style="left:307.8px;top:531.0px;font-size:12px;letter-spacing:0.324px;font-weight:bold">HttpServletResponse response) throws ServletException, IOException</span><span class="t" style="left:287.5px;top:565.0px;font-size:12px;letter-spacing:0.544px;font-style:italic">Note: The attached Javadoc could not be retrieved as the specified Javadoc location is either wrong</span><span class="t" style="left:287.5px;top:582.0px;font-size:12px;letter-spacing:0.488px;font-style:italic">or currently not accessible.</span><span class="t" style="left:785px;top:631.0px;font-size:12px;letter-spacing:-0.234px;color:#808080">Press &#x27;F2&#x27; for focus</span><div class="a" style="left:0;top:697px;width:1366px;height:4px;background:linear-gradient(#d3e4f6,#e2eefb)"></div><div class="a" style="left:0;top:701px;width:1366px;height:1px;background:#4a8af0"></div><div class="a" style="left:0;top:702px;width:1366px;height:26px;background:#8fb5e9"></div><div class="a" style="left:784px;top:702px;width:1px;height:22px;background:#757575"></div><div class="a" style="left:785px;top:702px;width:1px;height:22px;background:#e0ebfa"></div><div class="a" style="left:888px;top:702px;width:1px;height:22px;background:#757575"></div><div class="a" style="left:889px;top:702px;width:1px;height:22px;background:#e0ebfa"></div><div class="a" style="left:986px;top:702px;width:1px;height:22px;background:#757575"></div><div class="a" style="left:987px;top:702px;width:1px;height:22px;background:#e0ebfa"></div><span class="t" style="left:791.5px;top:705.0px;font-size:12.5px;letter-spacing:0.339px;">Writable</span><span class="t" style="left:895.5px;top:705.0px;font-size:12.5px;letter-spacing:0.220px;">Smart Insert</span><span class="t" style="left:993px;top:705.0px;font-size:12.5px;letter-spacing:0.044px;">28 : 23</span><div class="a" style="left:0;top:728px;width:1366px;height:40px;background:#0b1213"></div><div class="a" style="left:51px;top:728px;width:48px;height:40px;background:#3e3e3e"></div><div class="a" style="left:51px;top:766px;width:48px;height:2px;background:#8fbdea"></div><div class="a" style="left:104px;top:766px;width:40px;height:2px;background:#8fbdea"></div><span class="t" style="left:1263.5px;top:730.5px;font-size:12.5px;letter-spacing:-0.115px;color:#fff">8:39</span><span class="t" style="left:1250.5px;top:749.5px;font-size:12.5px;letter-spacing:0.261px;color:#fff">2019/3/7</span><span class="t" style="left:1186px;top:740.0px;font-size:14px;letter-spacing:0.000px;color:#fff">英</span><svg style="left:2px;top:3px" width="16" height="16" viewBox="0 0 16 16" preserveAspectRatio="none"><rect width="16" height="16" rx="3" fill="#1f3f80"/><path d="M14.800 2.800C13 .2 7.500 4 8.300 7.500 9.200 11 6.500 15.500 3 14.800-.2 14 3 8.800 8 7.300 12 6 16.500 5.300 14.800 2.800Z" fill="none" stroke="#fff" stroke-width="1"/></svg><div class="a" style="left:1245px;top:10px;width:10px;height:1px;background:#111"></div><svg style="left:1289px;top:4px" width="12" height="12" viewBox="0 0 12 12"><path d="M3.500 3.500V1.500h7v7h-2" fill="none" stroke="#111" stroke-width="1"/><rect x="1.500" y="3.500" width="7" height="7" rx=".8" fill="none" stroke="#111" stroke-width="1"/></svg><svg style="left:1336px;top:5px" width="10" height="10" viewBox="0 0 10 10"><path d="M0 0L10 10M10 0L0 10" stroke="#111" stroke-width="1.100"/></svg><div class="a" style="left:1132px;top:70px;width:136px;height:23px;background:#fafafa;border:1px solid #8c8c8c"></div><span class="t" style="left:1135.5px;top:73.5px;font-size:12.5px;letter-spacing:-0.003px;color:#5a5a5a">Quick Access</span><div class="a" style="left:1276px;top:70px;width:90px;height:13px;background:#e9f2fb"></div><div class="a" style="left:1276px;top:83px;width:90px;height:14px;background:#d9e8f8"></div><svg style="left:1270px;top:64px" width="96" height="36" viewBox="0 0 96 36"><path d="M6.500 0V29c0 3-1 4-3.500 4H96" fill="none" stroke="#8fb0d8" stroke-width="1.200"/></svg><svg style="left:1285px;top:74px" width="16" height="16" viewBox="0 0 16 16"><rect x="1" y="3" width="12" height="11.500" fill="#fff" stroke="#a88a4a" stroke-width="1.200"/><rect x="1.500" y="3.500" width="7" height="2.500" fill="#3f78d0"/><path d="M1 8.500h12M5 8.500v6" stroke="#a88a4a" stroke-width="1.200"/><path d="M12 0.10000000000000009L13.0 2.5L15.4 3.5L13.0 4.5L12 6.9L11.0 4.5L8.6 3.5L11.0 2.5Z" fill="#fff3a0" stroke="#d39a12" stroke-width=".9"/></svg><div class="a" style="left:1306px;top:73px;width:1px;height:18px;background:#9a9488"></div><div class="a" style="left:1312px;top:71px;width:23px;height:21px;background:#bcdcfb;border:1px solid #8fc4f8"></div><svg style="left:1317px;top:75px" width="14" height="14" viewBox="0 0 16 16" preserveAspectRatio="none"><rect width="16" height="16" rx="2.5" fill="#143a7a"/><path d="M14.800 2.800C13 .2 7.500 4 8.300 7.500 9.200 11 6.500 15.500 3 14.800-.2 14 3 8.800 8 7.300 12 6 16.500 5.300 14.800 2.800Z" fill="none" stroke="#fff" stroke-width="1"/></svg><svg style="left:1339px;top:74px" width="16" height="16" viewBox="0 0 16 16"><path d="M1.500 3l3.500 3M13.500 2.500l-3 3.500M.5 8.500h3.500M15 9h-3.500M2.500 14l2.500-2.500M13.500 14.500l-2.500-3M6 1.500l1 3M10 1l-1 3.500" stroke="#1f5f7a" stroke-width="1.100" fill="none"/><ellipse cx="8" cy="9.200" rx="3.200" ry="4.500" transform="rotate(28 8 9.200)" fill="#9cc86a" stroke="#2a6a84" stroke-width="1"/><ellipse cx="7.200" cy="8.200" rx="1.200" ry="2" transform="rotate(28 7.200 8.200)" fill="#d2ecaa"/><path d="M3 15.500l2-1M11 15.500l1.500-.5" stroke="#a04fb0" stroke-width=".8"/></svg><div class="a" style="left:0px;top:103px;width:33px;height:81px;background:#d6e7f6;border:1px solid #a4c0bc;border-radius:1px 1px 7px 7px"></div><div class="a" style="left:10px;top:109px;width:2px;height:2px;background:#9aa8d8"></div><div class="a" style="left:15px;top:109px;width:2px;height:2px;background:#9aa8d8"></div><div class="a" style="left:19px;top:109px;width:2px;height:2px;background:#9aa8d8"></div><div class="a" style="left:24px;top:109px;width:2px;height:2px;background:#9aa8d8"></div><svg style="left:12px;top:120px" width="9" height="8" viewBox="0 0 9 8"><rect x="3" y=".8" width="5" height="4" fill="#fff" stroke="#8a5a8a" stroke-width="1.300"/><rect x=".8" y="3.500" width="5" height="3.500" fill="#fff" stroke="#8a5a8a" stroke-width="1.300"/></svg><svg style="left:11px;top:139px" width="10" height="13" viewBox="0 0 10 13"><path d="M1.500 0v13M1.500 3.500h3M1.500 9.500h3" stroke="#7a9088" stroke-width="1.100" fill="none"/><rect x="4.500" y="1" width="5" height="5" fill="#fff" stroke="#c87a3a" stroke-width="1"/><path d="M7 1v5M4.500 3.500h5" stroke="#c87a3a" stroke-width=".9"/><rect x="4.500" y="7" width="5" height="5" fill="#fff" stroke="#c87a3a" stroke-width="1"/><path d="M7 7v5M4.500 9.500h5" stroke="#c87a3a" stroke-width=".9"/></svg><svg style="left:10px;top:160px" width="11" height="16" viewBox="0 0 11 16"><path d="M3.500 3v13M3.500 7.500h4M3.500 13.500h4" stroke="#6a7a78" stroke-width="1.100" fill="none"/><circle cx="3.500" cy="2.500" r="2.300" fill="#4aa84a" stroke="#2a7a3a" stroke-width=".8"/><circle cx="8.500" cy="7.500" r="2.300" fill="#4aa84a" stroke="#2a7a3a" stroke-width=".8"/><circle cx="8.500" cy="13.500" r="2.300" fill="#4aa84a" stroke="#2a7a3a" stroke-width=".8"/></svg><div class="a" style="left:1333px;top:103px;width:34px;height:170px;background:#d9e9f8;border:1px solid #a9c0c4;border-top-color:#b8cce0;border-radius:2px 0 0 7px"></div><div class="a" style="left:1345px;top:122px;width:7px;height:5px;background:#fff;border:1px solid #8a7a70"></div><svg style="left:1341px;top:138px" width="16" height="16" viewBox="0 0 16 16"><rect x="2" y="0" width="12" height="10" fill="#e8eef8" stroke="#9ab0d0" stroke-width=".8"/><circle cx="6" cy="4.500" r="2.300" fill="#e03a3a"/><path d="M9 1h4v14h-3.500l1-3z" fill="#f4f6fb" stroke="#8aa0c8" stroke-width=".8"/><path d="M3.500 9L.5 15h6z" fill="#ffd24a" stroke="#b8860a" stroke-width=".8"/><path d="M3.500 11v2.200" stroke="#222" stroke-width="1"/></svg><svg style="left:1341px;top:160px" width="16" height="16" viewBox="0 0 16 16"><rect x="3.500" y="2" width="11" height="13" fill="#f8f4e4" stroke="#b8a06a" stroke-width="1"/><rect x="6.500" y=".5" width="5" height="3" fill="#a8a8b8" stroke="#787888" stroke-width=".6"/><path d="M9 7h4M9 9.500h4M9 12h4" stroke="#7a8ab8" stroke-width="1"/><path d="M1 8.500l3 3.500 4.500-7" stroke="#1f4fb8" stroke-width="1.900" fill="none"/></svg><svg style="left:1341px;top:182px" width="16" height="16" viewBox="0 0 16 16"><rect x=".8" y=".8" width="14.500" height="14.500" fill="#f4ecd0" stroke="#b8a06a" stroke-width="1"/><circle cx="8" cy="8" r="5.500" fill="#3f78c8" stroke="#2a3f7a" stroke-width=".8"/><path d="M5 5.500c1.500-2 4.500-2 6 0l-1.500 3-3 1.500z" fill="#8fd07a"/><circle cx="6.500" cy="6" r="1.300" fill="#dff0ff" opacity=".8"/></svg><svg style="left:1341px;top:204px" width="16" height="16" viewBox="0 0 16 16"><rect x="1" y="1" width="14" height="10.500" rx="1" fill="#2f5fc8" stroke="#1f3f8a" stroke-width="1"/><rect x="2.500" y="2.500" width="11" height="7.500" fill="#e8f0ff"/><path d="M4 5h7M4 7.500h5" stroke="#2f5fc8" stroke-width="1.100"/><path d="M8 11.500v2.500M4 14.500h8" stroke="#1f3f8a" stroke-width="1.300"/></svg><svg style="left:1341px;top:226px" width="16" height="16" viewBox="0 0 16 16"><path d="M3.500 1v14M8 1v14M12.500 1v14" stroke="#4a5a6a" stroke-width="1"/><circle cx="3.500" cy="10.500" r="2" fill="#9fd03a" stroke="#5f8f1a" stroke-width=".7"/><circle cx="8" cy="5" r="2" fill="#ffb82a" stroke="#b87a0a" stroke-width=".7"/><circle cx="12.500" cy="10.500" r="2" fill="#7fb8f0" stroke="#3f78b8" stroke-width=".7"/></svg><svg style="left:1341px;top:249px" width="16" height="16" viewBox="0 0 16 16"><path d="M1 3.500h5l1 1.500h7V8" fill="#fbe7a8" stroke="#b88a4a" stroke-width=".9"/><path d="M1 3.500V13h12l2.500-6H4z" fill="#ffe9a6" stroke="#b88a4a" stroke-width=".9"/><rect x="3" y="1" width="9" height="5" fill="#dfe8f8" stroke="#8aa0c8" stroke-width=".7"/><circle cx="6" cy="12" r="2.800" fill="#e03a3a"/><path d="M9 10h3V8l4 3.700-4 3.800V13.500H9z" fill="#3fb83a" stroke="#1f7a2a" stroke-width=".7"/><path d="M1 14.500h6" stroke="#3f5fc8" stroke-width="1.200"/></svg><svg style="left:1340px;top:86px" width="26" height="54" viewBox="1340 86 26 54"><defs><linearGradient id="gc" x1="0" y1="0" x2="0" y2="1"><stop offset="0" stop-color="#7fdc6a"/><stop offset=".5" stop-color="#3fb85a"/><stop offset="1" stop-color="#2f9f4f"/></linearGradient></defs><circle cx="1370" cy="114" r="23.500" fill="rgba(120,130,140,.35)"/><circle cx="1370" cy="112.500" r="23" fill="#e4e8ea" stroke="#b8c0c4" stroke-width=".8"/><circle cx="1370" cy="112.500" r="20" fill="url(#gc)"/><text x="1353" y="116.800" font-family="Liberation Serif,serif" font-weight="bold" font-size="13" fill="#fff">41</text></svg><svg style="left:43px;top:109px" width="16" height="16" viewBox="0 0 16 16"><path d="M3.500 .8h7.500l3 3V14.500H3.500z" fill="#fbfaf2" stroke="#b89a5a" stroke-width="1"/><path d="M11 .8v3h3" fill="none" stroke="#b89a5a" stroke-width=".8"/><rect x="5.500" y="3" width="6" height="9" fill="#dce8f4"/><path d="M9.300 3.500v6c0 1.500-1 2-2.500 1.700" stroke="#1f5fa8" stroke-width="1.700" fill="none"/><path d="M3.300 8L.3 15.500h6.200z" fill="#ffd24a" stroke="#b8860a" stroke-width=".8"/><path d="M3.300 10.500v2.500M3.300 14v.8" stroke="#222" stroke-width="1.100"/></svg><svg style="left:184px;top:113px" width="8" height="8" viewBox="0 0 8 8"><path d="M.8 .8L7.200 7.200M7.200 .8L.8 7.200" stroke="#787878" stroke-width="1.700"/></svg><div class="a" style="left:1282px;top:111px;width:10px;height:4px;background:#fff;border:1px solid #8a8a98;border-radius:1px"></div><svg style="left:1305px;top:111px" width="9" height="8" viewBox="0 0 9 8"><rect x="2.500" y=".5" width="5.500" height="3.500" fill="#fff" stroke="#7a7a8a" stroke-width="1"/><rect x=".5" y="3.500" width="5.500" height="3.500" fill="#fff" stroke="#7a7a8a" stroke-width="1"/></svg><svg style="left:42px;top:147.5px" width="14" height="13" viewBox="0 0 14 13"><ellipse cx="4" cy="4.800" rx="3.300" ry="3.500" fill="#fff8d0" stroke="#ecd890" stroke-width=".8"/><path d="M2.800 8.500h2.500v2.500H2.800z" fill="#9ab0c8" stroke="#6a80a0" stroke-width=".6"/><path d="M9 4L4.800 12.200h8.500z" fill="#ffd24a" stroke="#b8860a" stroke-width=".9" stroke-linejoin="round"/><path d="M9 6.800v3M9 10.800v.8" stroke="#222" stroke-width="1.100"/></svg><svg style="left:42px;top:231.5px" width="14" height="13" viewBox="0 0 14 13"><ellipse cx="4" cy="4.800" rx="3.300" ry="3.500" fill="#fff8d0" stroke="#ecd890" stroke-width=".8"/><path d="M2.800 8.500h2.500v2.500H2.800z" fill="#9ab0c8" stroke="#6a80a0" stroke-width=".6"/><path d="M9 4L4.800 12.200h8.500z" fill="#ffd24a" stroke="#b8860a" stroke-width=".9" stroke-linejoin="round"/><path d="M9 6.800v3M9 10.800v.8" stroke="#222" stroke-width="1.100"/></svg><svg style="left:61px;top:149px" width="11" height="11" viewBox="0 0 11 11"><circle cx="5.500" cy="5.500" r="4.500" fill="#f4f8fc" stroke="#9ab4cc" stroke-width="1"/><path d="M3 5.500h5M5.500 3v5" stroke="#1f2f5a" stroke-width="1.100"/></svg><svg style="left:61px;top:317px" width="11" height="11" viewBox="0 0 11 11"><circle cx="5.500" cy="5.500" r="4.300" fill="#e6eff8" stroke="#c4ccd4" stroke-width="1"/><path d="M3 5.500h5" stroke="#7a96c0" stroke-width="1.100"/></svg><svg style="left:61px;top:485px" width="11" height="11" viewBox="0 0 11 11"><circle cx="5.500" cy="5.500" r="4.300" fill="#e6eff8" stroke="#c4ccd4" stroke-width="1"/><path d="M3 5.500h5" stroke="#7a96c0" stroke-width="1.100"/></svg><div class="a" style="left:42px;top:477px;width:12px;height:112px;background:#8cc2fc;background-image:repeating-conic-gradient(#e0eefd 0% 25%, #3a98fb 0% 50%);background-size:2px 2px"></div><div class="a" style="left:42px;top:477px;width:12px;height:1px;background:#3a98fb"></div><svg style="left:42.500px;top:319px" width="11" height="7" viewBox="0 0 11 7"><defs><linearGradient id="tg319" x1="0" y1="0" x2="0" y2="1"><stop offset="0" stop-color="#8fd88a"/><stop offset=".55" stop-color="#3fb04a"/><stop offset="1" stop-color="#16862a"/></linearGradient></defs><path d="M5.500 1L10.300 6H.7z" fill="#fff" stroke="none" stroke-linejoin="round"/><path d="M5.500 1L10.300 6H.7z" fill="url(#tg319)" stroke="#1a8a30" stroke-width=".7"/></svg><svg style="left:42.500px;top:487px" width="11" height="7" viewBox="0 0 11 7"><defs><linearGradient id="tg487" x1="0" y1="0" x2="0" y2="1"><stop offset="0" stop-color="#8fd88a"/><stop offset=".55" stop-color="#3fb04a"/><stop offset="1" stop-color="#16862a"/></linearGradient></defs><path d="M5.500 1L10.300 6H.7z" fill="#fff" stroke="#fff" stroke-width="2.200" stroke-linejoin="round"/><path d="M5.500 1L10.300 6H.7z" fill="url(#tg487)" stroke="#1a8a30" stroke-width=".7"/></svg><div class="a" style="left:54px;top:533px;width:8px;height:27px;background:#e0e0e0"></div><div class="a" style="left:54px;top:560px;width:8px;height:2px;background:#000"></div><div class="a" style="left:426px;top:145px;width:13px;height:21px;border:1px solid #a0a0a0"></div><div class="a" style="left:430px;top:162px;width:1px;height:1px;background:#a0a0a0"></div><div class="a" style="left:434px;top:162px;width:1px;height:1px;background:#a0a0a0"></div><svg style="left:243px;top:249px" width="196" height="4" viewBox="0 0 196 4"><path d="M0 2.500l2 -2l2 2l2 -2l2 2l2 -2l2 2l2 -2l2 2l2 -2l2 2l2 -2l2 2l2 -2l2 2l2 -2l2 2l2 -2l2 2l2 -2l2 2l2 -2l2 2l2 -2l2 2l2 -2l2 2l2 -2l2 2l2 -2l2 2l2 -2l2 2l2 -2l2 2l2 -2l2 2l2 -2l2 2l2 -2l2 2l2 -2l2 2l2 -2l2 2l2 -2l2 2l2 -2l2 2l2 -2l2 2l2 -2l2 2l2 -2l2 2l2 -2l2 2l2 -2l2 2l2 -2l2 2l2 -2l2 2l2 -2l2 2l2 -2l2 2l2 -2l2 2l2 -2l2 2l2 -2l2 2l2 -2l2 2l2 -2l2 2l2 -2l2 2l2 -2l2 2l2 -2l2 2l2 -2l2 2l2 -2l2 2l2 -2l2 2l2 -2l2 2l2 -2l2 2l2 -2l2 2l2 -2l2 2l2 -2l2 2" fill="none" stroke="#f4c84a" stroke-width="1" shape-rendering="crispEdges"/></svg><div class="a" style="left:1295px;top:186px;width:15px;height:470px;background:#c6c6c6"></div><svg style="left:1298px;top:136px" width="8" height="6" viewBox="0 0 8 6"><path d="M.8 5L4 1.500 7.200 5" fill="none" stroke="#444" stroke-width="1.700"/></svg><svg style="left:1298.500px;top:662px" width="8" height="6" viewBox="0 0 8 6"><path d="M.8 1L4 4.500 7.200 1" fill="none" stroke="#444" stroke-width="1.700"/></svg><svg style="left:77px;top:677px" width="6" height="8" viewBox="0 0 6 8"><path d="M5 .8L1.500 4 5 7.200" fill="none" stroke="#bcbcbc" stroke-width="1.900"/></svg><svg style="left:1283px;top:677px" width="6" height="8" viewBox="0 0 6 8"><path d="M1 .8L4.500 4 1 7.200" fill="none" stroke="#bcbcbc" stroke-width="1.900"/></svg><div class="a" style="left:1313px;top:134px;width:8px;height:8px;background:#fbba34"></div><div class="a" style="left:1312px;top:145px;width:11px;height:1px;background:#d0d0d0"></div><div class="a" style="left:1313px;top:193px;width:9px;height:5px;background:#fff2b0;border:1px solid #f4c430"></div><div class="a" style="left:1313px;top:266px;width:9px;height:5px;background:#fff2b0;border:1px solid #f4c430"></div><div class="a" style="left:1313px;top:410px;width:9px;height:5px;background:#fcfcfc;border:1px solid #d4d4d4"></div><div class="a" style="left:1313px;top:507px;width:9px;height:5px;background:#fcfcfc;border:1px solid #d4d4d4"></div><div class="a" style="left:360px;top:477px;width:2px;height:28px;background:#000"></div><svg style="left:307px;top:489px" width="9" height="17" viewBox="0 0 9 17"><path d="M1 1h2.500l1 1 1-1H8M1 16h2.500l1-1 1 1H8M4.500 2v13" fill="none" stroke="#fff" stroke-width="2.200" opacity=".7"/><path d="M1 1h2.500l1 1 1-1H8M1 16h2.500l1-1 1 1H8M4.500 2v13" fill="none" stroke="#222" stroke-width="1"/></svg><div class="a" style="left:1081px;top:707px;width:2px;height:1px;background:#7796cf"></div><div class="a" style="left:1081px;top:709px;width:2px;height:1px;background:#7796cf"></div><div class="a" style="left:1081px;top:711px;width:2px;height:1px;background:#7796cf"></div><div class="a" style="left:1081px;top:713px;width:2px;height:1px;background:#7796cf"></div><div class="a" style="left:1081px;top:715px;width:2px;height:1px;background:#7796cf"></div><div class="a" style="left:1081px;top:717px;width:2px;height:1px;background:#7796cf"></div><div class="a" style="left:1081px;top:719px;width:2px;height:1px;background:#7796cf"></div><div class="a" style="left:1081px;top:721px;width:2px;height:1px;background:#7796cf"></div><svg style="left:15px;top:739px" width="18" height="18" viewBox="0 0 18 18"><path d="M.8 3L7.300 2v6.500H.8zM8.300 1.800L17 .5V8.500H8.300zM.8 9.500H7.300V16L.8 15zM8.300 9.500H17V17.500L8.300 16.200z" fill="#fff"/></svg><svg style="left:65px;top:737px" width="21" height="22" viewBox="0 0 16 16" preserveAspectRatio="none"><rect width="16" height="16" rx="0" fill="#1f3f8a"/><path d="M14.800 2.800C13 .2 7.500 4 8.300 7.500 9.200 11 6.500 15.500 3 14.800-.2 14 3 8.800 8 7.300 12 6 16.500 5.300 14.800 2.800Z" fill="none" stroke="#fff" stroke-width="1"/></svg><svg style="left:112px;top:736px" width="24" height="24" viewBox="-12 -12 24 24"><circle r="11.200" fill="#dd4b3e"/><path d="M0 0L-9.700 -5.600A11.200 11.200 0 0 0 0 11.200z" fill="#1ea362" transform="rotate(0)"/><path d="M0 0L0 11.200A11.200 11.200 0 0 0 9.700 -5.600z" fill="#fdd13f"/><path d="M0 0L9.700 -5.600A11.200 11.200 0 0 0 -9.700 -5.600z" fill="#dd4b3e"/><circle r="5.300" fill="#f4f4f4"/><circle r="4.200" fill="#4c8bf5"/></svg><svg style="left:1068px;top:744px" width="13" height="8" viewBox="0 0 13 8"><path d="M.8 7L6.500 1.200 12.200 7" fill="none" stroke="#fff" stroke-width="1.300"/></svg><svg style="left:1089px;top:739px" width="18" height="18" viewBox="-9 -9 18 18"><circle r="8.300" fill="#f4d41a"/><circle r="8.300" fill="none" stroke="#c8a80a" stroke-width=".8"/><path d="M-2.500 -5.500h4v3.500h3.500v4h-3.500v3.500h-4v-3.500h-3.500v-4h3.500z" fill="#2fa82a" stroke="#1f8a1a" stroke-width=".6"/><path d="M-3.500 0h6M-.5 -3v6" stroke="#fffbd0" stroke-width="1.600"/><path d="M-6 -4.500c2-3 7-4 10-1" stroke="#fffde0" stroke-width="1.200" fill="none" opacity=".8"/></svg><svg style="left:1114px;top:742px" width="18" height="12" viewBox="0 0 18 12"><rect x="4.500" y="3" width="11.500" height="7.500" fill="none" stroke="#fff" stroke-width="1.200"/><rect x="16" y="5" width="1.500" height="3.500" fill="#fff"/><rect x="6" y="4.500" width="6" height="4.500" fill="#fff"/><path d="M2.500 0v3M5 0v3M1.500 3h4.500v2.500c0 1.500-1 2-2.200 2S1.500 7 1.500 5.500zM3.700 7.500V11" stroke="#fff" stroke-width="1" fill="#0b1213"/></svg><svg style="left:1138px;top:740px" width="17" height="16" viewBox="0 0 17 16"><path d="M2.500 .5v4.500M.5 1.500l4 2.500M4.500 1.500l-4 2.500" stroke="#fff" stroke-width=".9"/><circle cx="14.500" cy="13.500" r="1.500" fill="#8a8a8a"/><path d="M10.500 14a4 4 0 0 1 4-4.500" stroke="#8a8a8a" stroke-width="1.200" fill="none"/><path d="M7.500 14a7 7 0 0 1 7-7.500" stroke="#7a7a7a" stroke-width="1.200" fill="none"/><path d="M4.500 14a10 10 0 0 1 10-10.500" stroke="#6a6a6a" stroke-width="1.200" fill="none"/></svg><svg style="left:1162px;top:741px" width="17" height="14" viewBox="0 0 17 14"><path d="M.8 4.800h2.700L7 1.500v11L3.500 9.200H.8z" fill="none" stroke="#fff" stroke-width="1.100" stroke-linejoin="round"/><path d="M9.300 4.500c1.200 1.500 1.200 3.500 0 5M11.500 2.800c2 2.500 2 6 0 8.500" fill="none" stroke="#fff" stroke-width="1.100"/><path d="M13.800 1c2.800 3.500 2.800 8.500 0 12" fill="none" stroke="#8a8a8a" stroke-width="1.100"/></svg><div class="a" style="left:1215px;top:741px;width:14px;height:14px;background:#fff"></div><span class="t" style="left:1216.5px;top:740.5px;font-size:14px;letter-spacing:-0.672px;color:#000">M</span><svg style="left:1325px;top:739px" width="24" height="24" viewBox="0 0 24 24"><path d="M.8 1h15v11.500H8.500L4.500 16v-3.500H.8z" fill="#fff"/><path d="M3 4h10.500M3 6.500h10.500M3 9h10.500" stroke="#0b1213" stroke-width="1"/><circle cx="15.500" cy="16" r="7.500" fill="#2a2c2e" stroke="#c8c8c8" stroke-width="1.200"/></svg><span class="t" style="left:1338px;top:747.0px;font-size:11px;letter-spacing:-1.125px;color:#fff;font-weight:bold">1</span><div class="a" style="left:1361px;top:728px;width:1px;height:40px;background:#4a4e50"></div></body></html>
